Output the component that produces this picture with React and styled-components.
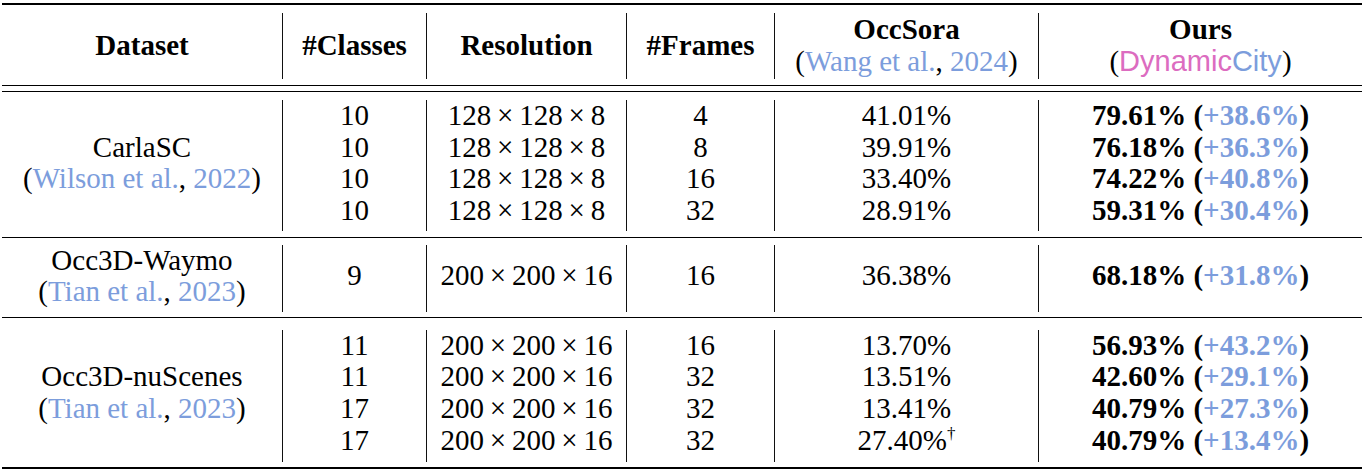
import React from "react";
import styled, { createGlobalStyle } from "styled-components";

const BLUE = "#7c9ddc";
const PINK = "#dc6cc0";

const Page = createGlobalStyle`
  body {
    margin: 0;
    background: #fff;
  }
`;

const Table = styled.div`
  margin: 3px 2px 0;
  width: 1360px;
  border-top: 2px solid #000;
  border-bottom: 2px solid #000;
  font-family: "Liberation Serif", "DejaVu Serif", serif;
  font-size: 29px;
  color: #000;
`;

const Row = styled.div`
  display: grid;
  grid-template-columns: 280px 144px 200px 148px 264px 1fr;
  padding: ${(p) => p.$pad};
  border-bottom: ${(p) => (p.$rule ? "1px solid #000" : "none")};
  border-top: ${(p) => (p.$double ? "1px solid #000" : "none")};
  margin-top: ${(p) => (p.$double ? "5px" : "0")};
`;

const Cell = styled.div`
  display: flex;
  flex-direction: column;
  align-items: center;
  justify-content: center;
  border-left: ${(p) => (p.$first ? "none" : "1px solid #111")};
  padding-bottom: ${(p) => p.$tail || "0"};
  font-weight: ${(p) => (p.$bold ? "bold" : "normal")};
`;

const Line = styled.div`
  height: ${(p) => p.$lh || "32px"};
  line-height: ${(p) => p.$lh || "32px"};
  white-space: nowrap;
  font-weight: ${(p) => (p.$bold ? "bold" : "inherit")};
`;

const Cite = styled.span`
  color: ${BLUE};
`;

const Sans = styled.span`
  font-family: "Liberation Sans", Arial, sans-serif;
  color: ${(p) => p.$color};
`;

const Times = styled.span`
  margin: 0 0.2em;
`;

const Gain = styled.span`
  color: ${BLUE};
`;

const Dagger = styled.sup`
  font-size: 17px;
  line-height: 0;
  vertical-align: 11px;
`;

const groups = [
  {
    name: "CarlaSC",
    cite: ["Wilson et al.", "2022"],
    pad: "8px 0 6px",
    tail: "4px",
    lh: "31.7px",
    rows: [
      ["10", "128×128×8", "4", "41.01%", "79.61%", "+38.6%"],
      ["10", "128×128×8", "8", "39.91%", "76.18%", "+36.3%"],
      ["10", "128×128×8", "16", "33.40%", "74.22%", "+40.8%"],
      ["10", "128×128×8", "32", "28.91%", "59.31%", "+30.4%"],
    ],
  },
  {
    name: "Occ3D-Waymo",
    cite: ["Tian et al.", "2023"],
    pad: "7px 0 5px",
    tail: "5px",
    lh: "31px",
    rows: [["9", "200×200×16", "16", "36.38%", "68.18%", "+31.8%"]],
  },
  {
    name: "Occ3D-nuScenes",
    cite: ["Tian et al.", "2023"],
    pad: "12px 0 5px",
    tail: "5px",
    lh: "31.7px",
    rows: [
      ["11", "200×200×16", "16", "13.70%", "56.93%", "+43.2%"],
      ["11", "200×200×16", "32", "13.51%", "42.60%", "+29.1%"],
      ["17", "200×200×16", "32", "13.41%", "40.79%", "+27.3%"],
      ["17", "200×200×16", "32", "27.40%", "40.79%", "+13.4%", true],
    ],
  },
];

const Resolution = ({ value }) =>
  value.split("×").map((n, i) => (
    <React.Fragment key={i}>
      {i > 0 && <Times>×</Times>}
      {n}
    </React.Fragment>
  ));

const Citation = ({ who, year }) => (
  <>
    (<Cite>{who}</Cite>, <Cite>{year}</Cite>)
  </>
);

const Group = ({ group, last, first }) => {
  const { lh, tail } = group;
  const col = (i) =>
    group.rows.map((r, k) => (
      <Line key={k} $lh={lh}>
        {r[i]}
      </Line>
    ));
  return (
    <Row $rule={!last} $double={first} $pad={group.pad}>
      <Cell $first $tail={tail}>
        <Line $lh={lh}>{group.name}</Line>
        <Line $lh={lh}>
          <Citation who={group.cite[0]} year={group.cite[1]} />
        </Line>
      </Cell>
      <Cell $tail={tail}>{col(0)}</Cell>
      <Cell $tail={tail}>
        {group.rows.map((r, k) => (
          <Line key={k} $lh={lh}>
            <Resolution value={r[1]} />
          </Line>
        ))}
      </Cell>
      <Cell $tail={tail}>{col(2)}</Cell>
      <Cell $tail={tail}>
        {group.rows.map((r, k) => (
          <Line key={k} $lh={lh}>
            {r[3]}
            {r[6] && <Dagger>†</Dagger>}
          </Line>
        ))}
      </Cell>
      <Cell $bold $tail={tail}>
        {group.rows.map((r, k) => (
          <Line key={k} $lh={lh}>
            {r[4]} (<Gain>{r[5]}</Gain>)
          </Line>
        ))}
      </Cell>
    </Row>
  );
};

export default function App() {
  return (
    <>
      <Page />
      <Table>
        <Row $pad="8px 0 6px" $rule>
          <Cell $first $bold $tail="2px">
            <Line>Dataset</Line>
          </Cell>
          <Cell $bold $tail="2px">
            <Line>#Classes</Line>
          </Cell>
          <Cell $bold $tail="2px">
            <Line>Resolution</Line>
          </Cell>
          <Cell $bold $tail="2px">
            <Line>#Frames</Line>
          </Cell>
          <Cell $tail="2px">
            <Line $bold>OccSora</Line>
            <Line>
              <Citation who="Wang et al." year="2024" />
            </Line>
          </Cell>
          <Cell $tail="2px">
            <Line $bold>Ours</Line>
            <Line>
              (<Sans $color={PINK}>Dynamic</Sans>
              <Sans $color={BLUE}>City</Sans>)
            </Line>
          </Cell>
        </Row>
        {groups.map((g, i) => (
          <Group
            key={g.name}
            group={g}
            first={i === 0}
            last={i === groups.length - 1}
          />
        ))}
      </Table>
    </>
  );
}
